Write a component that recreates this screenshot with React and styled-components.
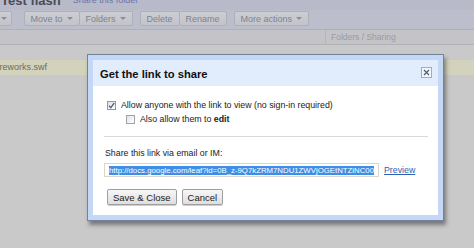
import React from "react";
import styled, { createGlobalStyle } from "styled-components";

const GlobalStyle = createGlobalStyle`
  html, body {
    margin: 0;
    padding: 0;
    width: 474px;
    height: 248px;
    overflow: hidden;
    background: #c9c9c9;
    font-family: "Liberation Sans", Arial, sans-serif;
  }
`;

const Page = styled.div`
  position: relative;
  width: 474px;
  height: 248px;
  overflow: hidden;
  background: #c9c9c9;
  display: flex;
  flex-direction: column;
`;

const Header = styled.div`
  height: 10px;
  overflow: hidden;
  background: #b8bac9;
  display: flex;
  align-items: flex-start;
  gap: 12px;
  padding-left: 1px;
`;

const FolderName = styled.span`
  margin-top: -7px;
  font-size: 13px;
  line-height: 15px;
  font-weight: bold;
  color: #4a4b55;
`;

const ShareFolder = styled.span`
  margin-top: -6px;
  font-size: 9px;
  line-height: 13px;
  color: #6c74a8;
`;

const Toolbar = styled.div`
  height: 20px;
  background: #bcbecb;
  display: flex;
  align-items: flex-start;
  padding-top: 1px;
  box-sizing: border-box;
  border-bottom: 1px solid #aeb0bb;
`;

const ButtonGroup = styled.div`
  display: flex;
  margin-left: ${(p) => p.offset}px;
`;

const ToolButton = styled.div`
  height: 15px;
  box-sizing: border-box;
  padding: 0 ${(p) => p.pad || 6}px;
  display: flex;
  align-items: center;
  gap: 4px;
  font-size: 9px;
  color: #80828c;
  background: linear-gradient(#cdced4, #c3c4cb);
  border: 1px solid #adafb9;
  border-left-width: ${(p) => (p.joined ? 0 : 1)}px;
  border-radius: 2px;
  white-space: nowrap;
`;

const Caret = styled.span`
  width: 0;
  height: 0;
  border-left: 3px solid transparent;
  border-right: 3px solid transparent;
  border-top: 3px solid #8a8c96;
`;

const ColumnHeader = styled.div`
  height: 15px;
  background: #c4c4c8;
  display: flex;
  border-bottom: 1px solid #b3b3b7;
  box-sizing: border-box;
`;

const ColSpacer = styled.div`
  width: 325px;
  border-right: 1px solid #b6b6ba;
`;

const ColLabel = styled.div`
  padding-left: 5px;
  font-size: 8.5px;
  line-height: 14px;
  color: #9a9aa0;
`;

const Spacer = styled.div`
  height: 15px;
`;

const FileRow = styled.div`
  height: 15px;
  background: #d3d3bd;
  font-size: 9px;
  line-height: 15px;
  color: #6b6b60;
  text-indent: -5px;
  overflow: hidden;
`;

const Dialog = styled.div`
  position: absolute;
  left: 87px;
  top: 54px;
  width: 357px;
  height: 167px;
  box-sizing: border-box;
  border: 1px solid #72829f;
  background: #c4d8f6;
  padding: 5px;
  box-shadow: 2px 4px 4px rgba(40, 40, 40, 0.5);
  display: flex;
  flex-direction: column;
`;

const TitleBar = styled.div`
  height: 26px;
  background: #e1ecfd;
  display: flex;
  align-items: center;
  justify-content: space-between;
  padding: 0 6px 0 7px;
  flex-shrink: 0;
`;

const Title = styled.span`
  font-size: 11.2px;
  font-weight: bold;
  color: #111;
  margin-top: 1px;
`;

const CloseBox = styled.div`
  width: 11px;
  height: 11px;
  box-sizing: border-box;
  border: 1px solid #9dadc8;
  background: #f1f5fc;
  display: flex;
  align-items: center;
  justify-content: center;
  margin-top: -2px;
`;

const Body = styled.div`
  flex: 1;
  background: #fff;
  padding: 13px 10px 0 11px;
  display: flex;
  flex-direction: column;
`;

const CheckRow = styled.label`
  display: flex;
  align-items: center;
  gap: 5px;
  height: 12px;
  margin-left: ${(p) => p.indent}px;
  margin-top: ${(p) => p.top || 0}px;
  font-size: 8.8px;
  color: #222;
`;

const Box = styled.span`
  width: 9px;
  height: 9px;
  box-sizing: border-box;
  border: 1px solid ${(p) => (p.checked ? "#8c99b0" : "#a2a2a2")};
  background: linear-gradient(135deg, #dfe3ea, #ffffff);
  display: flex;
  align-items: center;
  justify-content: center;
`;

const Bold = styled.b`
  font-weight: bold;
`;

const Divider = styled.div`
  height: 1px;
  background: #d9d9d9;
  margin-top: 11px;
`;

const ShareLabel = styled.div`
  margin-top: 10px;
  margin-left: 1px;
  font-size: 8.8px;
  line-height: 12px;
  color: #222;
`;

const LinkRow = styled.div`
  display: flex;
  align-items: center;
  gap: 5px;
  margin-top: 4px;
`;

const LinkField = styled.div`
  width: 275px;
  height: 14px;
  box-sizing: border-box;
  border: 1px solid #dcd6c8;
  padding: 0 3px 0 4px;
  overflow: hidden;
  white-space: nowrap;
  display: flex;
  align-items: center;
`;

const Selected = styled.span`
  background: #3d8ee6;
  color: #fff;
  font-size: 7.8px;
  line-height: 9px;
`;

const Preview = styled.a`
  font-size: 8.8px;
  color: #2f5fb3;
  text-decoration: underline;
`;

const Actions = styled.div`
  display: flex;
  gap: 5px;
  margin-top: 12px;
  margin-left: 3px;
`;

const Button = styled.button`
  height: 16px;
  padding: 0 ${(p) => p.pad}px;
  font-family: "Liberation Sans", Arial, sans-serif;
  font-size: 9.5px;
  color: #222;
  border: 1px solid #9e9e9e;
  border-radius: 2px;
  background: linear-gradient(#f7f7f7, #dedede);
  box-shadow: 0 1px 0 #cfcfcf;
`;

const CheckMark = () => (
  <svg width="7" height="7" viewBox="0 0 7 7">
    <path d="M1 3.6 L2.8 5.6 L6.2 1" fill="none" stroke="#4d5f8e" strokeWidth="1.3" />
  </svg>
);

const CloseIcon = () => (
  <svg width="7" height="7" viewBox="0 0 7 7">
    <path d="M1 1 L6 6 M6 1 L1 6" stroke="#4f5b72" strokeWidth="1.2" />
  </svg>
);

const App = () => (
  <>
    <GlobalStyle />
    <Page>
      <Header>
        <FolderName>Test flash</FolderName>
        <ShareFolder>Share this folder</ShareFolder>
      </Header>
      <Toolbar>
        <ButtonGroup offset={-25}>
          <ToolButton pad={4}>
            <span>Sort</span>
            <Caret />
          </ToolButton>
        </ButtonGroup>
        <ButtonGroup offset={12}>
          <ToolButton>
            Move to <Caret />
          </ToolButton>
          <ToolButton joined>
            Folders <Caret />
          </ToolButton>
        </ButtonGroup>
        <ButtonGroup offset={7}>
          <ToolButton>Delete</ToolButton>
          <ToolButton joined>Rename</ToolButton>
        </ButtonGroup>
        <ButtonGroup offset={7}>
          <ToolButton>
            More actions <Caret />
          </ToolButton>
        </ButtonGroup>
      </Toolbar>
      <ColumnHeader>
        <ColSpacer />
        <ColLabel>Folders / Sharing</ColLabel>
      </ColumnHeader>
      <Spacer />
      <FileRow>fireworks.swf</FileRow>

      <Dialog>
        <TitleBar>
          <Title>Get the link to share</Title>
          <CloseBox>
            <CloseIcon />
          </CloseBox>
        </TitleBar>
        <Body>
          <CheckRow indent={3}>
            <Box checked>
              <CheckMark />
            </Box>
            Allow anyone with the link to view (no sign-in required)
          </CheckRow>
          <CheckRow indent={22} top={2}>
            <Box />
            <span>
              Also allow them to <Bold>edit</Bold>
            </span>
          </CheckRow>
          <Divider />
          <ShareLabel>Share this link via email or IM:</ShareLabel>
          <LinkRow>
            <LinkField>
              <Selected>http://docs.google.com/leaf?id=0B_z-9Q7kZRM7NDU1ZWVjOGEtNTZiNC00</Selected>
            </LinkField>
            <Preview href="#">Preview</Preview>
          </LinkRow>
          <Actions>
            <Button pad={5}>Save &amp; Close</Button>
            <Button pad={5}>Cancel</Button>
          </Actions>
        </Body>
      </Dialog>
    </Page>
  </>
);

export default App;
